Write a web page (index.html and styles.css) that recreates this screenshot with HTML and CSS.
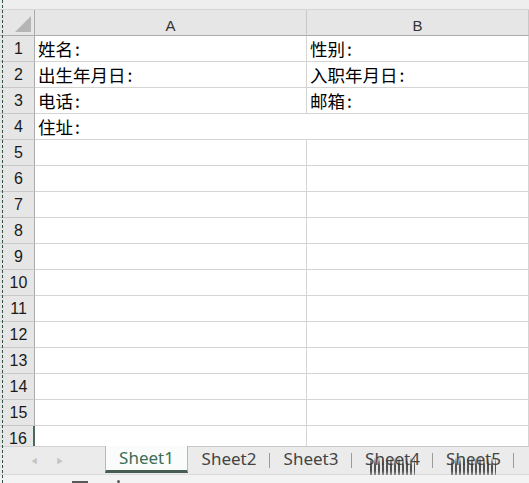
FILE: index.html
```html
<!DOCTYPE html>
<html lang="zh">
<head>
<meta charset="utf-8">
<title>Sheet</title>
<link rel="stylesheet" href="styles.css">
</head>
<body>
<div class="app">
  <div class="topstrip"></div>
  <div class="sheet">
    <div class="corner"><svg width="16" height="16" viewBox="0 0 16 16"><polygon points="16,0 16,16 0,16" fill="#b5b5b5"/></svg></div>
    <div class="colhead">A</div>
    <div class="colhead">B</div>

    <div class="rowhead">1</div><div class="cell">姓名<span class="colon">:</span></div><div class="cell">性别<span class="colon">:</span></div>
    <div class="rowhead">2</div><div class="cell">出生年月日<span class="colon">:</span></div><div class="cell">入职年月日<span class="colon">:</span></div>
    <div class="rowhead">3</div><div class="cell">电话<span class="colon">:</span></div><div class="cell">邮箱<span class="colon">:</span></div>
    <div class="rowhead">4</div><div class="cell span2">住址<span class="colon">:</span></div>
    <div class="rowhead">5</div><div class="cell"></div><div class="cell"></div>
    <div class="rowhead">6</div><div class="cell"></div><div class="cell"></div>
    <div class="rowhead">7</div><div class="cell"></div><div class="cell"></div>
    <div class="rowhead">8</div><div class="cell"></div><div class="cell"></div>
    <div class="rowhead">9</div><div class="cell"></div><div class="cell"></div>
    <div class="rowhead">10</div><div class="cell"></div><div class="cell"></div>
    <div class="rowhead">11</div><div class="cell"></div><div class="cell"></div>
    <div class="rowhead">12</div><div class="cell"></div><div class="cell"></div>
    <div class="rowhead">13</div><div class="cell"></div><div class="cell"></div>
    <div class="rowhead">14</div><div class="cell"></div><div class="cell"></div>
    <div class="rowhead">15</div><div class="cell"></div><div class="cell"></div>
    <div class="rowhead sel">16</div><div class="cell"></div><div class="cell"></div>
  </div>
  <div class="tabbar">
    <div class="nav"><span class="arrow">&#9664;</span><span class="arrow">&#9654;</span></div>
    <div class="tab active">Sheet1</div>
    <div class="tab">Sheet2</div>
    <div class="tab">Sheet3</div>
    <div class="tab glitch">Sheet4<span class="streak"></span></div>
    <div class="tab glitch">Sheet5<span class="streak"></span></div>
    <div class="tabrest"></div>
  </div>
  <div class="status">
    <span class="sicon dash"></span>
    <span class="sicon dot"></span>
  </div>
</div>
</body>
</html>
```

FILE: styles.css
```css
html, body {
  margin: 0;
  padding: 0;
  background: #ffffff;
}
body {
  width: 529px;
  height: 483px;
  overflow: hidden;
}
.app {
  position: relative;
  width: 529px;
  height: 483px;
  display: flex;
  flex-direction: column;
  overflow: hidden;
  font-family: "Liberation Sans", Arial, sans-serif;
}
.app::before {
  content: "";
  position: absolute;
  left: 2px;
  top: 0;
  bottom: 0;
  width: 0;
  border-left: 1px dashed #2f5244;
  z-index: 5;
}
.topstrip {
  height: 9px;
  flex: none;
  background: #eeeeee;
  border-bottom: 1px solid #d6d6d6;
}
.sheet {
  flex: none;
  height: 436px;
  overflow: hidden;
  display: grid;
  grid-template-columns: 35px 272px 222px;
  grid-template-rows: 26px repeat(16, 26px);
}
.corner {
  background: #e6e6e6;
  border-right: 1px solid #ababab;
  border-bottom: 1px solid #ababab;
  display: flex;
  align-items: flex-end;
  justify-content: flex-end;
  padding: 0 3px 3px 0;
  box-sizing: border-box;
}
.colhead {
  background: #e6e6e6;
  border-right: 1px solid #c8c8c8;
  border-bottom: 1px solid #ababab;
  box-sizing: border-box;
  font-size: 15px;
  color: #333333;
  text-align: center;
  line-height: 24px;
  padding-top: 4px;
}
.rowhead {
  background: #e6e6e6;
  border-right: 1px solid #ababab;
  border-bottom: 1px solid #c9c9c9;
  box-sizing: border-box;
  font-size: 16px;
  color: #1a1a1a;
  text-align: center;
  line-height: 26px;
  padding-left: 3px;
}
.rowhead.sel {
  border-right: 2px solid #4a6a5a;
}
.cell {
  border-right: 1px solid #d4d4d4;
  border-bottom: 1px solid #d4d4d4;
  box-sizing: border-box;
  font-family: "Noto Sans CJK SC", "Liberation Sans", sans-serif;
  font-size: 17.5px;
  color: #000000;
  line-height: 25px;
  padding-left: 3px;
  white-space: nowrap;
}
.colon {
  margin-left: 2px;
}
.cell.span2 {
  grid-column: span 2;
}
.tabbar {
  flex: none;
  height: 29px;
  display: flex;
  background: #ebebeb;
  font-family: "Noto Sans", "Liberation Sans", sans-serif;
  font-size: 17px;
  color: #444444;
  border-bottom: 1px solid #d9d9d9;
  box-sizing: border-box;
}
.nav {
  width: 105px;
  flex: none;
  border-top: 1px solid #d2d2d2;
  display: flex;
  align-items: center;
  gap: 18px;
  padding-left: 30px;
  box-sizing: border-box;
}
.arrow {
  font-size: 8px;
  color: #c4c4c4;
}
.tab {
  flex: none;
  width: 82px;
  box-sizing: border-box;
  border-top: 1px solid #c8c8c8;
  text-align: center;
  line-height: 24px;
  position: relative;
}
.tab::after {
  content: "";
  position: absolute;
  right: 0;
  top: 6px;
  height: 15px;
  border-right: 1px solid #9a9a9a;
}
.tab.active {
  width: 83px;
  background: #f9fcfa;
  color: #3b6d57;
  border-top: none;
  border-left: 1px solid #b9b9b9;
  border-right: 1px solid #b9b9b9;
  border-bottom: 3px solid #465d52;
  height: 27px;
}
.tab.active::after {
  display: none;
}
.tab.glitch {
  width: 81px;
}
.streak {
  position: absolute;
  left: 18px;
  right: 18px;
  top: 10px;
  bottom: -6px;
  background: repeating-linear-gradient(90deg, rgba(55,55,55,0.85) 0 2px, rgba(200,200,200,0.15) 2px 4px);
  -webkit-mask-image: linear-gradient(180deg, transparent 0%, #000 35%, #000 60%, transparent 100%);
  mask-image: linear-gradient(180deg, transparent 0%, #000 35%, #000 60%, transparent 100%);
}
.tabrest {
  flex: 1;
  border-top: 1px solid #c8c8c8;
}
.status {
  flex: 1;
  background: #f3f3f3;
  position: relative;
}
.sicon {
  position: absolute;
  background: #5a5a5a;
}
.sicon.dash {
  left: 72px;
  top: 6px;
  width: 16px;
  height: 2px;
}
.sicon.dot {
  left: 117px;
  top: 5px;
  width: 3px;
  height: 3px;
  border-radius: 50%;
}
```
